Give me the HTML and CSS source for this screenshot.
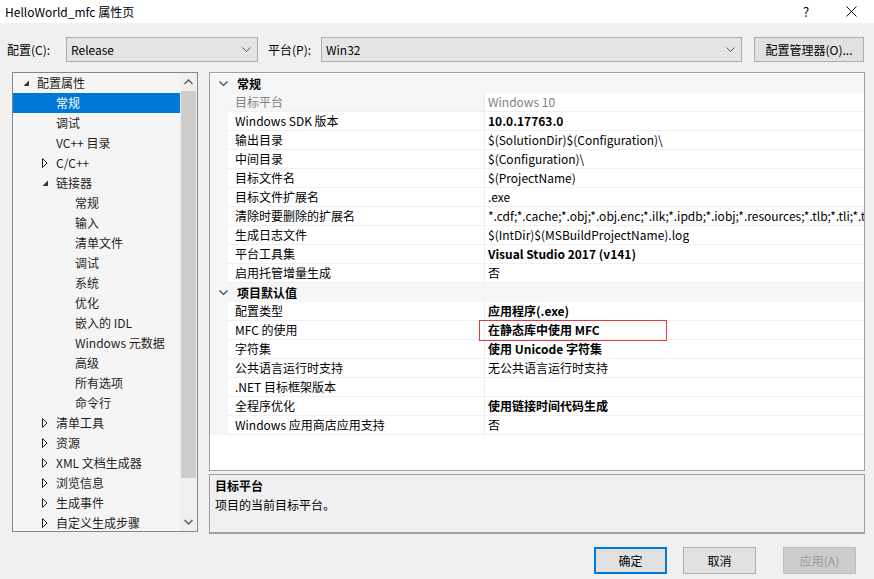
FILE: index.html
```html
<!DOCTYPE html>
<html lang="zh-CN">
<head>
  <meta charset="UTF-8" />
  <title>HelloWorld_mfc 属性页</title>
  <link rel="stylesheet" href="styles.css">
</head>
<body>
  <div class="titlebar">
    <div class="title">HelloWorld_mfc 属性页</div>
    <div class="tb-btn">?</div>
    <div class="tb-btn">
      <svg width="11" height="11" viewBox="0 0 11 11"><path d="M0.5 0.5 L10.5 10.5 M10.5 0.5 L0.5 10.5" stroke="#111" stroke-width="1" fill="none"/></svg>
    </div>
  </div>

  <div class="toolbar">
    <span class="lbl lbl-cfg">配置(C):</span>
    <div class="combo combo-cfg">
      <span>Release</span>
      <svg width="9" height="6" viewBox="0 0 9 6"><path d="M0.5 0.5 L4.5 4.5 L8.5 0.5" stroke="#555" fill="none"/></svg>
    </div>
    <span class="lbl lbl-plat">平台(P):</span>
    <div class="combo combo-plat">
      <span>Win32</span>
      <svg width="9" height="6" viewBox="0 0 9 6"><path d="M0.5 0.5 L4.5 4.5 L8.5 0.5" stroke="#555" fill="none"/></svg>
    </div>
    <button class="btn btn-mgr">配置管理器(O)...</button>
  </div>

  <div class="main">
    <div class="tree">
      <ul class="nodes">
        <li class="lvl0"><span class="tw"><svg width="7" height="7" viewBox="0 0 7 7"><polygon points="6,0.5 6,6 0.5,6" fill="#333"/></svg></span>配置属性</li>
        <li class="lvl1 selected"><span class="tw"></span>常规</li>
        <li class="lvl1"><span class="tw"></span>调试</li>
        <li class="lvl1"><span class="tw"></span>VC++ 目录</li>
        <li class="lvl1"><span class="tw"><svg width="6" height="10" viewBox="0 0 6 10"><polygon points="0.5,0.5 5,5 0.5,9.5" fill="none" stroke="#222"/></svg></span>C/C++</li>
        <li class="lvl1"><span class="tw"><svg width="7" height="7" viewBox="0 0 7 7"><polygon points="6,0.5 6,6 0.5,6" fill="#333"/></svg></span>链接器</li>
        <li class="lvl2"><span class="tw"></span>常规</li>
        <li class="lvl2"><span class="tw"></span>输入</li>
        <li class="lvl2"><span class="tw"></span>清单文件</li>
        <li class="lvl2"><span class="tw"></span>调试</li>
        <li class="lvl2"><span class="tw"></span>系统</li>
        <li class="lvl2"><span class="tw"></span>优化</li>
        <li class="lvl2"><span class="tw"></span>嵌入的 IDL</li>
        <li class="lvl2"><span class="tw"></span>Windows 元数据</li>
        <li class="lvl2"><span class="tw"></span>高级</li>
        <li class="lvl2"><span class="tw"></span>所有选项</li>
        <li class="lvl2"><span class="tw"></span>命令行</li>
        <li class="lvl1"><span class="tw"><svg width="6" height="10" viewBox="0 0 6 10"><polygon points="0.5,0.5 5,5 0.5,9.5" fill="none" stroke="#222"/></svg></span>清单工具</li>
        <li class="lvl1"><span class="tw"><svg width="6" height="10" viewBox="0 0 6 10"><polygon points="0.5,0.5 5,5 0.5,9.5" fill="none" stroke="#222"/></svg></span>资源</li>
        <li class="lvl1"><span class="tw"><svg width="6" height="10" viewBox="0 0 6 10"><polygon points="0.5,0.5 5,5 0.5,9.5" fill="none" stroke="#222"/></svg></span>XML 文档生成器</li>
        <li class="lvl1"><span class="tw"><svg width="6" height="10" viewBox="0 0 6 10"><polygon points="0.5,0.5 5,5 0.5,9.5" fill="none" stroke="#222"/></svg></span>浏览信息</li>
        <li class="lvl1"><span class="tw"><svg width="6" height="10" viewBox="0 0 6 10"><polygon points="0.5,0.5 5,5 0.5,9.5" fill="none" stroke="#222"/></svg></span>生成事件</li>
        <li class="lvl1"><span class="tw"><svg width="6" height="10" viewBox="0 0 6 10"><polygon points="0.5,0.5 5,5 0.5,9.5" fill="none" stroke="#222"/></svg></span>自定义生成步骤</li>
      </ul>
      <div class="vscroll">
        <div class="sb-arrow"><svg width="9" height="6" viewBox="0 0 9 6"><path d="M0.5 5 L4.5 1 L8.5 5" stroke="#606060" stroke-width="1.5" fill="none"/></svg></div>
        <div class="sb-thumb"></div>
        <div class="sb-rest"></div>
        <div class="sb-arrow"><svg width="9" height="6" viewBox="0 0 9 6"><path d="M0.5 1 L4.5 5 L8.5 1" stroke="#606060" stroke-width="1.5" fill="none"/></svg></div>
      </div>
    </div>

    <div class="right">
      <div class="grid">
        <div class="cat"><span class="chev"><svg width="9" height="6" viewBox="0 0 9 6"><path d="M0.5 0.5 L4.5 4.5 L8.5 0.5" stroke="#444" stroke-width="1.2" fill="none"/></svg></span><b>常规</b></div>
        <div class="prow readonly"><span class="pm"></span><span class="pn">目标平台</span><span class="pv">Windows 10</span></div>
        <div class="prow"><span class="pm"></span><span class="pn">Windows SDK 版本</span><span class="pv"><b>10.0.17763.0</b></span></div>
        <div class="prow"><span class="pm"></span><span class="pn">输出目录</span><span class="pv">$(SolutionDir)$(Configuration)\</span></div>
        <div class="prow"><span class="pm"></span><span class="pn">中间目录</span><span class="pv">$(Configuration)\</span></div>
        <div class="prow"><span class="pm"></span><span class="pn">目标文件名</span><span class="pv">$(ProjectName)</span></div>
        <div class="prow"><span class="pm"></span><span class="pn">目标文件扩展名</span><span class="pv">.exe</span></div>
        <div class="prow"><span class="pm"></span><span class="pn">清除时要删除的扩展名</span><span class="pv">*.cdf;*.cache;*.obj;*.obj.enc;*.ilk;*.ipdb;*.iobj;*.resources;*.tlb;*.tli;*.tlh;*.tmp</span></div>
        <div class="prow"><span class="pm"></span><span class="pn">生成日志文件</span><span class="pv">$(IntDir)$(MSBuildProjectName).log</span></div>
        <div class="prow"><span class="pm"></span><span class="pn">平台工具集</span><span class="pv"><b>Visual Studio 2017 (v141)</b></span></div>
        <div class="prow"><span class="pm"></span><span class="pn">启用托管增量生成</span><span class="pv">否</span></div>
        <div class="cat"><span class="chev"><svg width="9" height="6" viewBox="0 0 9 6"><path d="M0.5 0.5 L4.5 4.5 L8.5 0.5" stroke="#444" stroke-width="1.2" fill="none"/></svg></span><b>项目默认值</b></div>
        <div class="prow"><span class="pm"></span><span class="pn">配置类型</span><span class="pv"><b>应用程序(.exe)</b></span></div>
        <div class="prow"><span class="pm"></span><span class="pn">MFC 的使用</span><span class="pv"><b>在静态库中使用 MFC</b></span></div>
        <div class="prow"><span class="pm"></span><span class="pn">字符集</span><span class="pv"><b>使用 Unicode 字符集</b></span></div>
        <div class="prow"><span class="pm"></span><span class="pn">公共语言运行时支持</span><span class="pv">无公共语言运行时支持</span></div>
        <div class="prow"><span class="pm"></span><span class="pn">.NET 目标框架版本</span><span class="pv"></span></div>
        <div class="prow"><span class="pm"></span><span class="pn">全程序优化</span><span class="pv"><b>使用链接时间代码生成</b></span></div>
        <div class="prow"><span class="pm"></span><span class="pn">Windows 应用商店应用支持</span><span class="pv">否</span></div>
        <div class="mark"></div>
      </div>
      <div class="desc">
        <div class="desc-title">目标平台</div>
        <div>项目的当前目标平台。</div>
      </div>
    </div>
  </div>

  <div class="actions">
    <button class="btn btn-ok">确定</button>
    <button class="btn btn-cancel">取消</button>
    <button class="btn btn-apply" disabled>应用(A)</button>
  </div>
</body>
</html>
```

FILE: styles.css
```css
body {
  margin: 0;
  width: 874px;
  height: 579px;
  overflow: hidden;
  background: #f0f0f0;
  font-family: "Noto Sans CJK SC", "Noto Sans", sans-serif;
  font-size: 12px;
  color: #000;
}
.titlebar {
  height: 23px;
  background: #fff;
  display: flex;
  align-items: center;
  padding-left: 5px;
}
.titlebar .title {
  flex: 1;
  font-size: 12px;
}
.tb-btn {
  width: 46px;
  height: 23px;
  display: flex;
  align-items: center;
  justify-content: center;
  font-size: 13px;
}
.tb-btn:last-child {
  width: 45px;
}

.toolbar {
  display: flex;
  align-items: center;
  padding: 14px 0 0 7px;
  height: 25px;
}
.lbl {
  white-space: nowrap;
}
.lbl-cfg {
  width: 59px;
}
.lbl-plat {
  width: 53px;
  margin-left: 10px;
}
.combo {
  box-sizing: border-box;
  height: 25px;
  background: #e5e5e5;
  border: 1px solid #acacac;
  display: flex;
  align-items: center;
  justify-content: space-between;
  padding: 0 6px 0 4px;
}
.combo-cfg {
  width: 192px;
}
.combo-plat {
  width: 421px;
}
.btn {
  box-sizing: border-box;
  font-family: inherit;
  font-size: 12px;
  background: #e1e1e1;
  border: 1px solid #adadad;
  color: #000;
  padding: 0;
}
.btn-mgr {
  width: 110px;
  height: 25px;
  margin-left: 12px;
}

.main {
  display: flex;
  margin-top: 10px;
  padding-left: 12px;
}
.tree {
  box-sizing: border-box;
  width: 186px;
  height: 460px;
  border: 1px solid #828790;
  background: #f5f5f5;
  display: flex;
}
.nodes {
  list-style: none;
  margin: 0;
  padding: 0;
  flex: 1;
}
.nodes li {
  height: 20px;
  line-height: 20px;
  display: flex;
  align-items: center;
  color: #1e1e1e;
  white-space: nowrap;
}
.nodes .tw {
  width: 14px;
  display: flex;
  align-items: center;
}
.lvl0 {
  padding-left: 10px;
}
.lvl1 {
  padding-left: 29px;
}
.lvl2 {
  padding-left: 48px;
}
.nodes li.selected {
  background: #0078d7;
  color: #fff;
}
.vscroll {
  width: 17px;
  background: #f0f0f0;
  display: flex;
  flex-direction: column;
}
.sb-arrow {
  height: 18px;
  display: flex;
  align-items: center;
  justify-content: center;
}
.sb-thumb {
  height: 387px;
  margin: 0 1px;
  background: #cdcdcd;
}
.sb-rest {
  flex: 1;
}

.right {
  margin-left: 11px;
  width: 656px;
}
.grid {
  position: relative;
  box-sizing: border-box;
  height: 399px;
  border: 1px solid #a0a0a0;
  background: #fff;
  overflow: hidden;
  padding-top: 1px;
}
.cat, .prow {
  height: 19px;
  display: flex;
  align-items: center;
  white-space: nowrap;
}
.cat {
  background: #f5f6f8;
}
.cat .chev {
  width: 26px;
  display: flex;
  justify-content: center;
  padding-right: 1px;
}
.prow {
  box-sizing: border-box;
  border-bottom: 1px solid #f0f0f0;
}
.pm {
  width: 18px;
  height: 19px;
  background: #f5f6f8;
  flex: none;
}
.pn {
  width: 249px;
  padding-left: 7px;
  height: 18px;
  line-height: 18px;
  flex: none;
  border-right: 1px solid #ececec;
}
.pv {
  padding-left: 3px;
  height: 18px;
  line-height: 18px;
  overflow: hidden;
}
.readonly .pn {
  background: #f5f6f8;
  color: #808080;
}
.readonly .pv {
  color: #808080;
}
.mark {
  position: absolute;
  left: 269px;
  top: 247px;
  width: 186px;
  height: 19px;
  border: 1px solid #e0393e;
}
.desc {
  box-sizing: border-box;
  height: 60px;
  margin-top: 3px;
  border: 1px solid #a0a0a0;
  border-bottom-width: 2px;
  padding: 1px 5px;
  line-height: 19px;
}
.desc-title {
  font-weight: bold;
}

.actions {
  display: flex;
  justify-content: flex-end;
  padding-right: 18px;
  margin-top: 13px;
}
.actions .btn {
  width: 73px;
  height: 27px;
}
.btn-ok {
  border: 2px solid #0078d7;
}
.btn-cancel {
  margin-left: 16px;
}
.btn-apply {
  margin-left: 27px;
  background: #cccccc;
  border-color: #bfbfbf;
  color: #9a9a9a;
}
```
